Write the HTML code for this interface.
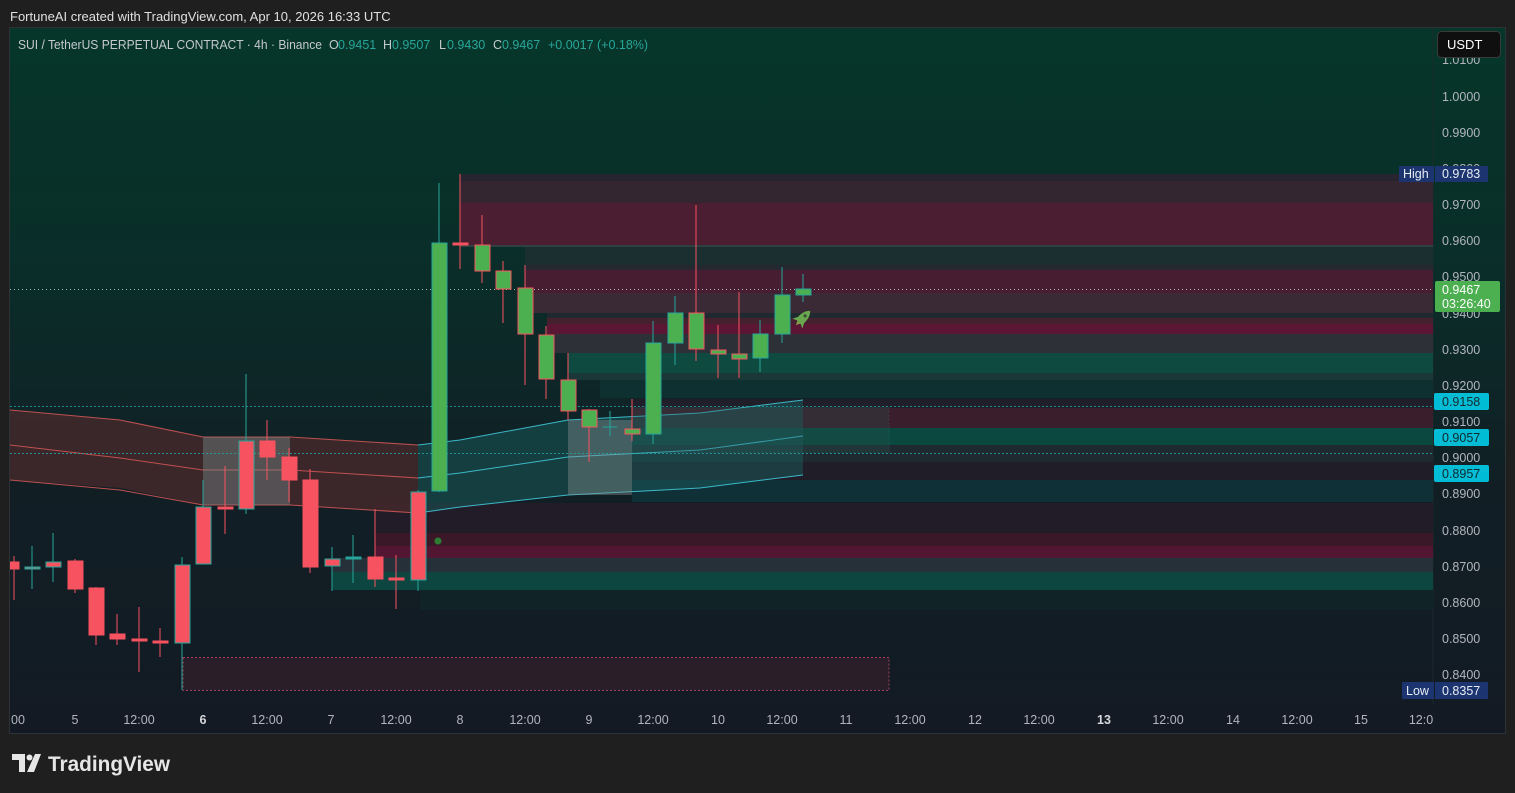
<!DOCTYPE html>
<html><head><meta charset="utf-8"><style>
html,body{margin:0;padding:0;background:#1f1f1f;width:1515px;height:793px;overflow:hidden;font-family:"Liberation Sans",sans-serif}
svg{display:block}
</style></head><body>
<svg width="1515" height="793" viewBox="0 0 1515 793" xmlns="http://www.w3.org/2000/svg" font-family="Liberation Sans, sans-serif">
<defs>
<linearGradient id="bg" x1="0" y1="0" x2="0" y2="1">
<stop offset="0" stop-color="#063629"/>
<stop offset="0.35" stop-color="#0a2d29"/>
<stop offset="0.65" stop-color="#111f25"/>
<stop offset="1" stop-color="#131a24"/>
</linearGradient>
<clipPath id="cl"><rect x="10" y="28" width="1423" height="676"/></clipPath>
</defs>
<rect width="1515" height="793" fill="#1f1f1f"/>
<text x="10" y="21" fill="#e0e0e0" font-size="13">FortuneAI created with TradingView.com, Apr 10, 2026 16:33 UTC</text>
<rect x="9.5" y="27.5" width="1496" height="706" fill="url(#bg)" stroke="#2e3136"/>
<line x1="1433" y1="28" x2="1433" y2="704" stroke="#1a2a2c"/>
<g clip-path="url(#cl)">
<g>
<rect x="460" y="174" width="973" height="7" fill="#2a2530" opacity="0.9"/>
<rect x="460" y="181" width="973" height="22" fill="#342630"/>
<rect x="460" y="203" width="973" height="42" fill="#4b1e31"/>
<rect x="460" y="245" width="973" height="2" fill="#2e4040"/>
<rect x="525" y="247" width="908" height="18" fill="#1b2e30"/>
<rect x="525" y="265" width="908" height="5" fill="#252830"/>
<rect x="525" y="270" width="908" height="23" fill="#471e31"/>
<rect x="525" y="293" width="908" height="20" fill="#3a2a35"/>
<rect x="547" y="313" width="886" height="5" fill="#1e2a30"/>
<rect x="547" y="318" width="886" height="6" fill="#45202f"/>
<rect x="547" y="324" width="886" height="10" fill="#5a1632"/>
<rect x="547" y="334" width="886" height="19" fill="#2e3038"/>
<rect x="568" y="353" width="865" height="20" fill="#0e4a40"/>
<rect x="568" y="373" width="865" height="7" fill="#1a3838"/>
<rect x="600" y="380" width="833" height="18" fill="#0f3030"/>
<rect x="632" y="399" width="801" height="9" fill="#201e28"/>
<rect x="632" y="408" width="801" height="20" fill="#3a1e2c"/>
<rect x="632" y="428" width="801" height="17" fill="#0b4840"/>
<rect x="632" y="445" width="801" height="17" fill="#1f2a30"/>
<rect x="632" y="462" width="801" height="18" fill="#201c28"/>
<rect x="632" y="480" width="801" height="22" fill="#103038"/>
<rect x="375" y="503" width="1058" height="30" fill="#221c28"/>
<rect x="375" y="533" width="1058" height="13" fill="#3a1828"/>
<rect x="375" y="546" width="1058" height="12" fill="#521632"/>
<rect x="332" y="558" width="1101" height="14" fill="#253038"/>
<rect x="332" y="572" width="1101" height="18" fill="#0d4540"/>
<rect x="420" y="590" width="1013" height="20" fill="#102428"/>
</g>
<rect x="183" y="657.5" width="706" height="33" fill="#2a1e28" stroke="#a04060" stroke-dasharray="2,2" stroke-width="1"/>
<path d="M10 410 L120 420 L203 437 L290 437 L418 445 L418 513 L290 505 L203 505 L120 488 L10 480 Z" fill="#4a2a2c" opacity="0.75"/>
<path d="M10 410 L120 420 L203 437 L290 437 L418 445" fill="none" stroke="#c05050" stroke-width="1"/>
<path d="M10 445 L120 458 L203 470 L290 470 L418 478" fill="none" stroke="#c05050" stroke-width="1"/>
<path d="M10 480 L120 490 L203 505 L290 505 L418 513" fill="none" stroke="#c05050" stroke-width="1"/>
<path d="M418 445 L460 440 L568 420 L700 413 L803 400 L803 475 L700 488 L568 495 L460 507 L418 513 Z" fill="#1a5858" opacity="0.55"/>
<path d="M418 445 L460 440 L568 420 L700 413 L803 400" fill="none" stroke="#3cb8c8" stroke-width="1"/>
<path d="M418 478 L460 473 L568 457 L700 450 L803 436" fill="none" stroke="#3cb8c8" stroke-width="1"/>
<path d="M418 513 L460 507 L568 495 L700 488 L803 475" fill="none" stroke="#3cb8c8" stroke-width="1"/>
<rect x="203" y="437" width="87" height="68" fill="#7a9090" opacity="0.4"/>
<rect x="568" y="420" width="64" height="75" fill="#8a9090" opacity="0.4"/>
<rect x="632" y="407.5" width="257" height="45" fill="#2a5050" opacity="0.3" stroke="#3a8080" stroke-dasharray="2,2"/>
<line x1="10" y1="289.5" x2="1433" y2="289.5" stroke="#b0b8b8" stroke-dasharray="1,3"/>
<line x1="10" y1="406.5" x2="1433" y2="406.5" stroke="#20a8a8" stroke-dasharray="2,2" opacity="0.8"/>
<line x1="10" y1="453.5" x2="1433" y2="453.5" stroke="#20a8a8" stroke-dasharray="2,2" opacity="0.8"/>
<g stroke-width="1">
<g stroke="#f7525f" fill="#f7525f">
<line x1="14" y1="556" x2="14" y2="600"/><rect x="8" y="562" width="11" height="7"/>
</g>
<g stroke="#26a69a"><line x1="32" y1="546" x2="32" y2="589"/><rect x="25" y="567" width="15" height="2" fill="#8a8a8a"/></g>
<g stroke="#26a69a"><line x1="53" y1="533" x2="53" y2="582"/><rect x="46" y="562" width="15" height="5" fill="#f7525f"/></g>
<g stroke="#f7525f"><line x1="75" y1="559" x2="75" y2="593"/><rect x="68" y="561" width="15" height="28" fill="#f7525f"/></g>
<g stroke="#f7525f"><line x1="96" y1="587" x2="96" y2="645"/><rect x="89" y="588" width="15" height="47" fill="#f7525f"/></g>
<g stroke="#f7525f"><line x1="117" y1="614" x2="117" y2="645"/><rect x="110" y="634" width="15" height="5" fill="#f7525f"/></g>
<g stroke="#f7525f"><line x1="139" y1="607" x2="139" y2="672"/><rect x="132" y="639" width="15" height="2" fill="#f7525f"/></g>
<g stroke="#f7525f"><line x1="160" y1="628" x2="160" y2="657"/><rect x="153" y="641" width="15" height="2" fill="#f7525f"/></g>
<g stroke="#26a69a"><line x1="182" y1="557" x2="182" y2="690"/><rect x="175" y="565" width="15" height="78" fill="#f7525f"/></g>
<g stroke="#26a69a"><line x1="203" y1="480" x2="203" y2="564"/><rect x="196" y="507" width="15" height="57" fill="#f7525f"/></g>
<g stroke="#f7525f"><line x1="225" y1="466" x2="225" y2="534"/><rect x="218" y="507" width="15" height="2" fill="#f7525f"/></g>
<g stroke="#26a69a"><line x1="246" y1="374" x2="246" y2="514"/><rect x="239" y="441" width="15" height="68" fill="#f7525f"/></g>
<g stroke="#f7525f"><line x1="267" y1="420" x2="267" y2="480"/><rect x="260" y="441" width="15" height="16" fill="#f7525f"/></g>
<g stroke="#f7525f"><line x1="289" y1="448" x2="289" y2="502"/><rect x="282" y="457" width="15" height="23" fill="#f7525f"/></g>
<g stroke="#f7525f"><line x1="310" y1="469" x2="310" y2="573"/><rect x="303" y="480" width="15" height="87" fill="#f7525f"/></g>
<g stroke="#26a69a"><line x1="332" y1="547" x2="332" y2="591"/><rect x="325" y="559" width="15" height="7" fill="#f7525f"/></g>
<g stroke="#26a69a"><line x1="353" y1="535" x2="353" y2="583"/><rect x="346" y="557" width="15" height="2" fill="#26a69a"/></g>
<g stroke="#f7525f"><line x1="375" y1="509" x2="375" y2="587"/><rect x="368" y="557" width="15" height="22" fill="#f7525f"/></g>
<g stroke="#f7525f"><line x1="396" y1="555" x2="396" y2="609"/><rect x="389" y="578" width="15" height="2" fill="#f7525f"/></g>
<g stroke="#26a69a"><line x1="418" y1="490" x2="418" y2="591"/><rect x="411" y="492" width="15" height="88" fill="#f7525f"/></g>
<g stroke="#26a69a"><line x1="439" y1="183" x2="439" y2="492"/><rect x="432" y="243" width="15" height="248" fill="#4caf50"/></g>
<g stroke="#f7525f"><line x1="460" y1="174" x2="460" y2="269"/><rect x="453" y="243" width="15" height="2" fill="#f7525f"/></g>
<g stroke="#f7525f"><line x1="482" y1="215" x2="482" y2="283"/><rect x="475" y="245" width="15" height="26" fill="#4caf50"/></g>
<g stroke="#f7525f"><line x1="503" y1="261" x2="503" y2="323"/><rect x="496" y="271" width="15" height="18" fill="#4caf50"/></g>
<g stroke="#f7525f"><line x1="525" y1="265" x2="525" y2="385"/><rect x="518" y="288" width="15" height="46" fill="#4caf50"/></g>
<g stroke="#f7525f"><line x1="546" y1="326" x2="546" y2="399"/><rect x="539" y="335" width="15" height="44" fill="#4caf50"/></g>
<g stroke="#f7525f"><line x1="568" y1="353" x2="568" y2="420"/><rect x="561" y="380" width="15" height="31" fill="#4caf50"/></g>
<g stroke="#f7525f"><line x1="589" y1="409" x2="589" y2="462"/><rect x="582" y="410" width="15" height="17" fill="#4caf50"/></g>
<g stroke="#26a69a"><line x1="610" y1="411" x2="610" y2="436"/><line x1="603" y1="427" x2="617" y2="427"/></g>
<g stroke="#f7525f"><line x1="632" y1="399" x2="632" y2="441"/><rect x="625" y="429" width="15" height="5" fill="#4caf50"/></g>
<g stroke="#26a69a"><line x1="653" y1="321" x2="653" y2="444"/><rect x="646" y="343" width="15" height="91" fill="#4caf50"/></g>
<g stroke="#26a69a"><line x1="675" y1="296" x2="675" y2="365"/><rect x="668" y="313" width="15" height="30" fill="#4caf50"/></g>
<g stroke="#f7525f"><line x1="696" y1="205" x2="696" y2="361"/><rect x="689" y="313" width="15" height="36" fill="#4caf50"/></g>
<g stroke="#f7525f"><line x1="718" y1="325" x2="718" y2="378"/><rect x="711" y="350" width="15" height="4" fill="#4caf50"/></g>
<g stroke="#f7525f"><line x1="739" y1="292" x2="739" y2="378"/><rect x="732" y="354" width="15" height="5" fill="#4caf50"/></g>
<g stroke="#26a69a"><line x1="760" y1="320" x2="760" y2="372"/><rect x="753" y="334" width="15" height="24" fill="#4caf50"/></g>
<g stroke="#26a69a"><line x1="782" y1="267" x2="782" y2="343"/><rect x="775" y="295" width="15" height="39" fill="#4caf50"/></g>
<g stroke="#26a69a"><line x1="803" y1="274" x2="803" y2="302"/><rect x="796" y="289" width="15" height="6" fill="#4caf50"/></g>
</g>
<circle cx="438" cy="541" r="3.5" fill="#2e7d32"/>
<g transform="translate(803,318) rotate(45)">
<path d="M0 -10 C5 -6 5 3 3.5 6 L-3.5 6 C-5 3 -5 -6 0 -10 Z" fill="#6aa84f"/>
<path d="M-3.5 1 L-7 8 L-3 6 Z M3.5 1 L7 8 L3 6 Z" fill="#6aa84f"/>
<path d="M-2 6 L0 10 L2 6 Z" fill="#8a9a50"/>
<circle cx="0" cy="-3" r="1.6" fill="#3a5030"/>
</g>
</g>
<!-- legend -->
<g font-size="12.5">
<text x="18" y="49" fill="#c4c8cc" textLength="304" lengthAdjust="spacingAndGlyphs">SUI / TetherUS PERPETUAL CONTRACT · 4h · Binance</text>
<text x="329" y="49" fill="#c4c8cc">O</text><text x="338" y="49" fill="#26a69a">0.9451</text>
<text x="383" y="49" fill="#c4c8cc">H</text><text x="392" y="49" fill="#26a69a">0.9507</text>
<text x="439" y="49" fill="#c4c8cc">L</text><text x="447" y="49" fill="#26a69a">0.9430</text>
<text x="493" y="49" fill="#c4c8cc">C</text><text x="502" y="49" fill="#26a69a">0.9467</text>
<text x="548" y="49" fill="#26a69a">+0.0017 (+0.18%)</text>
</g>
<g font-size="12.5" fill="#b2b5be">
<text x="1442" y="64">1.0100</text>
<text x="1442" y="101">1.0000</text>
<text x="1442" y="137">0.9900</text>
<text x="1442" y="173">0.9800</text>
<text x="1442" y="209">0.9700</text>
<text x="1442" y="245">0.9600</text>
<text x="1442" y="281">0.9500</text>
<text x="1442" y="318">0.9400</text>
<text x="1442" y="354">0.9300</text>
<text x="1442" y="390">0.9200</text>
<text x="1442" y="426">0.9100</text>
<text x="1442" y="462">0.9000</text>
<text x="1442" y="498">0.8900</text>
<text x="1442" y="535">0.8800</text>
<text x="1442" y="571">0.8700</text>
<text x="1442" y="607">0.8600</text>
<text x="1442" y="643">0.8500</text>
<text x="1442" y="679">0.8400</text>
</g>
<rect x="1437.5" y="31.5" width="63" height="26" rx="4" fill="#0f0f0f" stroke="#3a3a3a"/>
<text x="1447" y="49" font-size="13" fill="#ffffff">USDT</text>
<rect x="1399" y="166" width="35" height="16" fill="#1c3470"/>
<text x="1403" y="178" font-size="12.5" fill="#e8ecf4">High</text>
<rect x="1435" y="166" width="53" height="16" fill="#1c3470"/>
<text x="1442" y="178" font-size="12.5" fill="#e8ecf4">0.9783</text>
<rect x="1435" y="281" width="65" height="31" rx="2" fill="#4caf50"/>
<text x="1442" y="294" font-size="12.5" fill="#ffffff">0.9467</text>
<text x="1442" y="308" font-size="12.5" fill="#ffffff">03:26:40</text>
<rect x="1434" y="393" width="55" height="17" rx="2" fill="#00bcd4"/>
<text x="1442" y="406" font-size="12.5" fill="#0a2a30">0.9158</text>
<rect x="1434" y="429" width="55" height="17" rx="2" fill="#00bcd4"/>
<text x="1442" y="442" font-size="12.5" fill="#0a2a30">0.9057</text>
<rect x="1434" y="465" width="55" height="17" rx="2" fill="#00bcd4"/>
<text x="1442" y="478" font-size="12.5" fill="#0a2a30">0.8957</text>
<rect x="1402" y="682" width="32" height="17" fill="#1c3470"/>
<text x="1406" y="695" font-size="12.5" fill="#e8ecf4">Low</text>
<rect x="1435" y="682" width="53" height="17" fill="#1c3470"/>
<text x="1442" y="695" font-size="12.5" fill="#e8ecf4">0.8357</text>
<g font-size="12.5" fill="#b2b5be" text-anchor="middle">
<text x="18" y="724">00</text>
<text x="75" y="724">5</text>
<text x="139" y="724">12:00</text>
<text x="203" y="724" font-weight="bold" fill="#d6d8dc">6</text>
<text x="267" y="724">12:00</text>
<text x="331" y="724">7</text>
<text x="396" y="724">12:00</text>
<text x="460" y="724">8</text>
<text x="525" y="724">12:00</text>
<text x="589" y="724">9</text>
<text x="653" y="724">12:00</text>
<text x="718" y="724">10</text>
<text x="782" y="724">12:00</text>
<text x="846" y="724">11</text>
<text x="910" y="724">12:00</text>
<text x="975" y="724">12</text>
<text x="1039" y="724">12:00</text>
<text x="1104" y="724" font-weight="bold" fill="#d6d8dc">13</text>
<text x="1168" y="724">12:00</text>
<text x="1233" y="724">14</text>
<text x="1297" y="724">12:00</text>
<text x="1361" y="724">15</text>
<text x="1421" y="724">12:0</text>
</g>
<g fill="#e6e6e6">
<path d="M12 754 H25 V772 H19 V760 H12 Z"/>
<circle cx="29.5" cy="757.5" r="3"/>
<path d="M35 754 H41 L34 772 H27 Z"/>
</g>
<text x="48" y="771" font-size="21" font-weight="bold" fill="#e6e6e6" textLength="122" lengthAdjust="spacingAndGlyphs">TradingView</text>
</svg>
</body></html>
